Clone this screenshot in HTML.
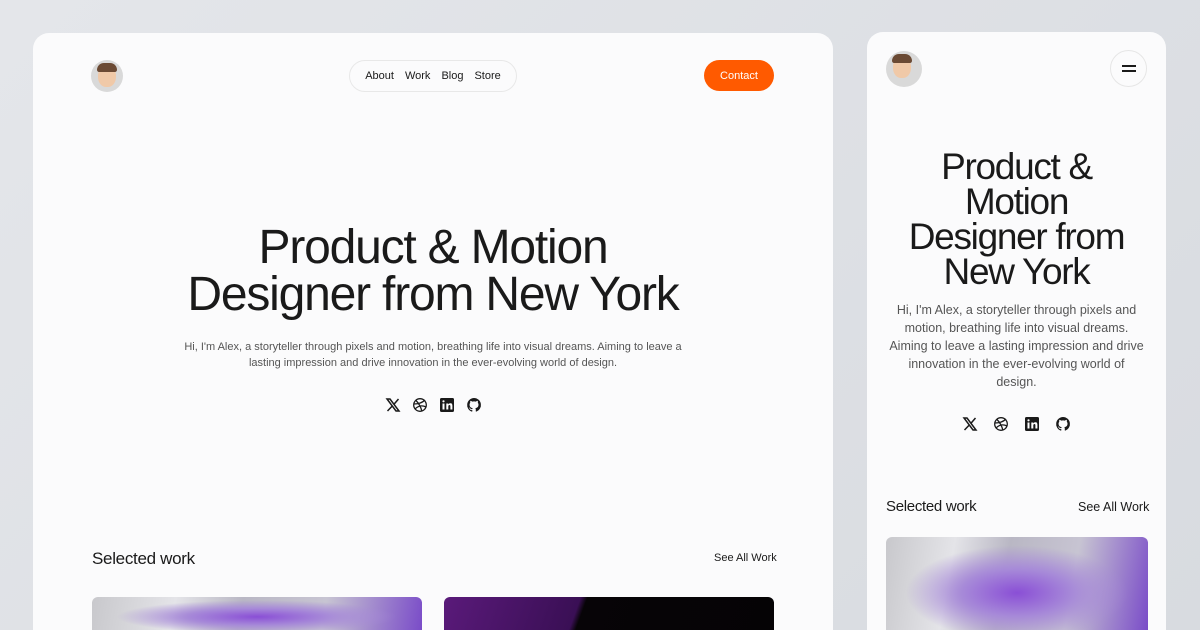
<!DOCTYPE html>
<html><head><meta charset="utf-8"><style>
*{margin:0;padding:0;box-sizing:border-box}
html,body{width:1200px;height:630px;overflow:hidden}
body{background:linear-gradient(135deg,#e4e6ea,#d8dbe0);font-family:"Liberation Sans",sans-serif;color:#1a1a1a;position:relative}
.card{position:absolute;background:#fbfbfc;border-radius:16px 16px 0 0;overflow:hidden}
.d{left:33px;top:33px;width:800px;height:597px}
.m{left:867px;top:32px;width:299px;height:598px}
.av{position:absolute;width:32px;height:32px;border-radius:50%;background:#d9d9d9;overflow:hidden}
.av::before{content:"";position:absolute;left:7px;top:5px;width:18px;height:22px;border-radius:50% 50% 45% 45%;background:#f0c9a8}
.av::after{content:"";position:absolute;left:6px;top:3px;width:20px;height:9px;border-radius:10px 10px 3px 3px;background:#6b4a34}
.nav{position:absolute;left:316px;top:27px;width:168px;height:32px;border:1px solid #e8e8e8;border-radius:16px;font-size:11px;display:flex;justify-content:center;align-items:center;gap:11px}
.btn{position:absolute;left:671px;top:27px;width:70px;height:31px;background:#ff5a00;color:#fff;border-radius:16px;font-size:11px;text-align:center;line-height:32px}
h1{position:absolute;font-weight:400;letter-spacing:-1.2px;text-align:center;color:#1a1a1a}
p{position:absolute;text-align:center;color:#555}
.ic{position:absolute;display:flex;gap:11px}
.ic svg{width:16px;height:16px}
.sw{position:absolute;font-size:17px;letter-spacing:-.3px}
.sa{position:absolute;font-size:11px}
.img{position:absolute;border-radius:6px 6px 0 0;overflow:hidden}
.g1{background:radial-gradient(ellipse at 50% 60%,#8a4fd6 0%,#a78ad8 30%,transparent 60%),linear-gradient(100deg,#c8c8cc 0%,#e4e4e8 25%,#b9b7c4 45%,#c7c4d2 70%,#7a4cc8 100%)}
.g2{background:linear-gradient(110deg,#5a1a7a 0%,#3a0f55 40%,#070407 42%,#050305 100%)}
</style></head><body>
<div class="card d">
 <div class="av" style="left:58px;top:27px"></div>
 <div class="nav"><span>About</span><span>Work</span><span>Blog</span><span>Store</span></div>
 <div class="btn">Contact</div>
 <h1 style="left:0;width:800px;top:191px;font-size:48px;line-height:47px">Product &amp; Motion<br>Designer from New York</h1>
 <p style="left:140px;width:520px;top:306px;font-size:11px;line-height:16px">Hi, I'm Alex, a storyteller through pixels and motion, breathing life into visual dreams. Aiming to leave a lasting impression and drive innovation in the ever-evolving world of design.</p>
 <div class="ic" style="left:352px;top:364px">
  <svg viewBox="0 0 16 16"><path d="M2 2h3l9 12h-3zM13.5 2L9.2 7M6.8 9.5L2.5 14" stroke="#1a1a1a" stroke-width="1.5" fill="none"/></svg>
  <svg viewBox="0 0 16 16" fill="none" stroke="#1a1a1a" stroke-width="1.3"><circle cx="8" cy="8" r="6.3"/><path d="M4 3.5c3 3 5 7 6 11M2 7c4 0 8-1 11-4M3 12c3-3 7-4 11-2"/></svg>
  <svg viewBox="0 0 16 16"><rect x="1" y="1" width="14" height="14" rx="1.5" fill="#1a1a1a"/><rect x="3.5" y="6.5" width="2" height="6" fill="#fff"/><circle cx="4.5" cy="4.3" r="1.1" fill="#fff"/><path d="M7.3 6.5h1.9v1c.5-.8 1.3-1.2 2.2-1.2 1.6 0 2 1 2 2.6v3.6h-2V9.3c0-.8-.2-1.3-.9-1.3s-1.2.5-1.2 1.4v3.1h-2z" fill="#fff"/></svg>
  <svg viewBox="0 0 16 16"><path d="M8 1a7 7 0 00-2.2 13.6c.35.07.5-.15.5-.34v-1.2c-1.95.42-2.36-.94-2.36-.94-.32-.8-.78-1.02-.78-1.02-.63-.43.05-.42.05-.42.7.05 1.07.72 1.07.72.63 1.07 1.64.76 2.04.58.06-.45.24-.76.44-.94-1.55-.18-3.18-.78-3.18-3.46 0-.76.27-1.39.72-1.88-.07-.18-.31-.89.07-1.85 0 0 .59-.19 1.92.72a6.6 6.6 0 013.5 0c1.33-.91 1.92-.72 1.92-.72.38.96.14 1.67.07 1.85.45.49.72 1.12.72 1.88 0 2.69-1.64 3.28-3.2 3.45.25.22.48.65.48 1.3v1.93c0 .19.13.41.5.34A7 7 0 008 1z" fill="#1a1a1a"/></svg>
 </div>
 <div class="sw" style="left:59px;top:516px">Selected work</div>
 <div class="sa" style="left:681px;top:519px">See All Work</div>
 <div class="img g1" style="left:59px;top:564px;width:330px;height:33px"></div>
 <div class="img g2" style="left:411px;top:564px;width:330px;height:33px"></div>
</div>
<div class="card m">
 <div class="av" style="left:19px;top:19px;width:36px;height:36px"></div>
 <div style="position:absolute;left:243px;top:18px;width:37px;height:37px;border:1px solid #e6e6e6;border-radius:50%"><div style="position:absolute;left:11px;top:14px;width:14px;height:1.5px;background:#1a1a1a"></div><div style="position:absolute;left:11px;top:19px;width:14px;height:1.5px;background:#1a1a1a"></div></div>
 <h1 style="left:0;width:299px;top:117px;font-size:37px;line-height:35px;letter-spacing:-1.3px">Product &amp;<br>Motion<br>Designer from<br>New York</h1>
 <p style="left:0;width:299px;top:269px;font-size:12.5px;line-height:18px;white-space:nowrap">Hi, I'm Alex, a storyteller through pixels and<br>motion, breathing life into visual dreams.<br>Aiming to leave a lasting impression and drive<br>innovation in the ever-evolving world of<br>design.</p>
 <div class="ic" style="left:95px;top:384px;gap:15px">
  <svg viewBox="0 0 16 16"><path d="M2 2h3l9 12h-3zM13.5 2L9.2 7M6.8 9.5L2.5 14" stroke="#1a1a1a" stroke-width="1.5" fill="none"/></svg>
  <svg viewBox="0 0 16 16" fill="none" stroke="#1a1a1a" stroke-width="1.3"><circle cx="8" cy="8" r="6.3"/><path d="M4 3.5c3 3 5 7 6 11M2 7c4 0 8-1 11-4M3 12c3-3 7-4 11-2"/></svg>
  <svg viewBox="0 0 16 16"><rect x="1" y="1" width="14" height="14" rx="1.5" fill="#1a1a1a"/><rect x="3.5" y="6.5" width="2" height="6" fill="#fff"/><circle cx="4.5" cy="4.3" r="1.1" fill="#fff"/><path d="M7.3 6.5h1.9v1c.5-.8 1.3-1.2 2.2-1.2 1.6 0 2 1 2 2.6v3.6h-2V9.3c0-.8-.2-1.3-.9-1.3s-1.2.5-1.2 1.4v3.1h-2z" fill="#fff"/></svg>
  <svg viewBox="0 0 16 16"><path d="M8 1a7 7 0 00-2.2 13.6c.35.07.5-.15.5-.34v-1.2c-1.95.42-2.36-.94-2.36-.94-.32-.8-.78-1.02-.78-1.02-.63-.43.05-.42.05-.42.7.05 1.07.72 1.07.72.63 1.07 1.64.76 2.04.58.06-.45.24-.76.44-.94-1.55-.18-3.18-.78-3.18-3.46 0-.76.27-1.39.72-1.880-.07-.18-.31-.89.07-1.85 0 0 .59-.19 1.92.72a6.6 6.6 0 013.5 0c1.33-.91 1.92-.72 1.92-.72.38.96.14 1.67.07 1.85.45.49.72 1.12.72 1.88 0 2.69-1.64 3.28-3.2 3.45.25.22.48.65.48 1.3v1.93c0 .19.13.41.5.34A7 7 0 008 1z" fill="#1a1a1a"/></svg>
 </div>
 <div class="sw" style="left:19px;top:466px;font-size:15px">Selected work</div>
 <div class="sa" style="left:211px;top:468px;font-size:12.5px">See All Work</div>
 <div class="img g1" style="left:19px;top:505px;width:262px;height:93px"></div>
</div>
</body></html>
